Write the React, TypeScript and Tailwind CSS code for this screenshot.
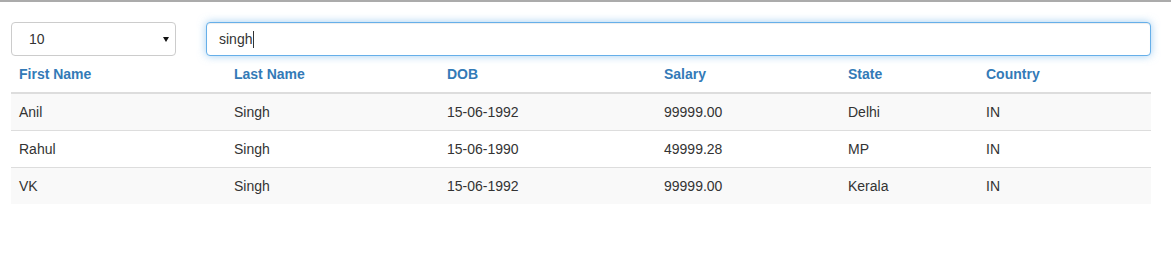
import React from "react";

const rows = [
  ["Anil", "Singh", "15-06-1992", "99999.00", "Delhi", "IN"],
  ["Rahul", "Singh", "15-06-1990", "49999.28", "MP", "IN"],
  ["VK", "Singh", "15-06-1992", "99999.00", "Kerala", "IN"],
];
const heads = ["First Name", "Last Name", "DOB", "Salary", "State", "Country"];
const widths = [215, 213, 217, 184, 138, 173];

export default function App() {
  return (
    <div
      className="w-[1171px] h-[280px] bg-white border-t-2 border-[#ababab] text-[14px] leading-[20px] text-[#333]"
      style={{ fontFamily: '"Liberation Sans", Arial, sans-serif' }}
    >
      <div className="pl-[11px] pt-[20px]">
        <div className="flex items-center gap-[30px]">
          <div className="relative w-[165px] h-[34px] border border-[#cccccc] rounded-[4px] bg-white flex items-center pl-[17px]">
            <span>10</span>
            <svg className="absolute left-[151px] top-[14px]" width="6" height="5" viewBox="0 0 6 5">
              <path d="M0 0H6L3 5Z" fill="#111" />
            </svg>
          </div>
          <div className="w-[945px] h-[34px] border border-[#66afe9] rounded-[4px] bg-white flex items-center pl-[12px] shadow-[inset_0_1px_1px_rgba(0,0,0,0.075),0_0_8px_rgba(102,175,233,0.6)]">
            <span>singh</span>
            <span className="inline-block w-px h-[17px] bg-[#333] ml-px" />
          </div>
        </div>
        <table className="w-[1140px] border-collapse table-fixed">
          <colgroup>
            {widths.map((w, i) => (
              <col key={i} style={{ width: w }} />
            ))}
          </colgroup>
          <thead>
            <tr>
              {heads.map((h) => (
                <th key={h} className="text-left font-bold text-[#337ab7] p-[8px] border-b-2 border-[#dddddd]">
                  {h}
                </th>
              ))}
            </tr>
          </thead>
          <tbody>
            {rows.map((r, i) => (
              <tr key={i} className={i % 2 === 0 ? "bg-[#f9f9f9]" : "bg-white"}>
                {r.map((c, j) => (
                  <td key={j} className={`p-[8px] ${i > 0 ? "border-t border-[#dddddd]" : ""}`}>
                    {c}
                  </td>
                ))}
              </tr>
            ))}
          </tbody>
        </table>
      </div>
    </div>
  );
}
